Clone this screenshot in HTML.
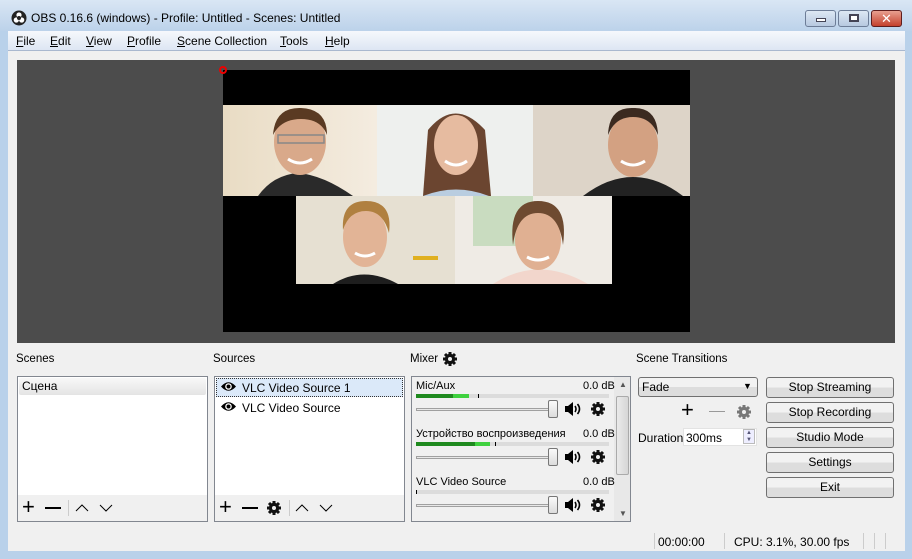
<!DOCTYPE html>
<html><head><meta charset="utf-8"><style>
*{margin:0;padding:0;box-sizing:border-box}
body{width:912px;height:559px;overflow:hidden;font-family:"Liberation Sans","DejaVu Sans",sans-serif;font-size:12px;color:#000;background:#b9d1ea;position:relative}
.a{position:absolute}
.title{left:0;top:0;width:912px;height:31px;background:linear-gradient(#d9e6f4,#bcd2ea)}
.client{left:8px;top:31px;width:897px;height:520px;background:#f0f0f0}
.menu{left:8px;top:31px;width:897px;height:20px;background:linear-gradient(#f6f8fc,#dde6f3);border-bottom:1px solid #a9b8cf}
.menu span{position:absolute;top:3px;font-size:12px}
.lbl{font-size:11.5px}
.box{background:#fff;border:1px solid #828790}
.tb{background:#f0f0f0}
.btn{left:766px;width:128px;height:21px;border:1px solid #707070;border-radius:3px;background:linear-gradient(#f2f2f2 50%,#dddddd 50%);text-align:center;line-height:19px;font-size:12px}
.wb{top:10px;height:17px;border:1px solid #6d7d97;border-radius:3px;background:linear-gradient(#dde8f4,#b7c9e0)}
.track{height:4px;background:#dcdcdc}
.sl{height:3px;border:1px solid #a0a0a0;background:#e8e8e8}
.knob{width:10px;height:18px;border:1px solid #777;border-radius:2px;background:linear-gradient(#fafafa,#dcdcdc)}
</style></head><body>
<div class="a title"></div>
<svg class="a" style="left:11px;top:10px" width="16" height="16" viewBox="0 0 16 16"><circle cx="8" cy="8" r="7.5" fill="#222"/><circle cx="8" cy="5" r="2.6" fill="#fff"/><circle cx="5.3" cy="10" r="2.6" fill="#fff"/><circle cx="10.7" cy="10" r="2.6" fill="#fff"/><circle cx="8" cy="8" r="2" fill="#222"/></svg>
<div class="a" style="left:31px;top:11px;font-size:12px">OBS 0.16.6 (windows) - Profile: Untitled - Scenes: Untitled</div>
<div class="a wb" style="left:805px;width:31px"><div class="a" style="left:10px;top:7px;width:10px;height:4px;background:#fff;border:1px solid #445"></div></div>
<div class="a wb" style="left:838px;width:31px"><div class="a" style="left:10px;top:3px;width:10px;height:8px;border:2px solid #445;background:#fff"></div></div>
<div class="a" style="left:871px;top:10px;width:31px;height:17px;border:1px solid #5e1d1d;border-radius:3px;background:linear-gradient(#e8a090,#c4402c);color:#fff;text-align:center;font-weight:bold;font-size:13px;line-height:15px">✕</div>
<div class="a client"></div>
<div class="a menu">
<span style="left:8px"><u>F</u>ile</span><span style="left:42px"><u>E</u>dit</span><span style="left:78px"><u>V</u>iew</span><span style="left:119px"><u>P</u>rofile</span><span style="left:169px"><u>S</u>cene Collection</span><span style="left:272px"><u>T</u>ools</span><span style="left:317px"><u>H</u>elp</span></div>
<div class="a" style="left:17px;top:60px;width:878px;height:283px;background:#4c4c4c"></div>
<div class="a" style="left:223px;top:70px;width:467px;height:262px;background:#000"></div>
<div class="a" style="left:219px;top:66px;width:8px;height:8px;border:2px solid #e00;border-radius:50%"></div>
<svg class="a" style="left:223px;top:105px" width="467" height="180">
<defs><linearGradient id="g1" x1="0" x2="1"><stop offset="0" stop-color="#e9dcc4"/><stop offset="1" stop-color="#f4ece0"/></linearGradient></defs>
<rect x="0" y="0" width="154" height="91" fill="url(#g1)"/>
<rect x="154" y="0" width="156" height="91" fill="#eef0ee"/>
<rect x="310" y="0" width="157" height="91" fill="#ddd4c8"/>
<rect x="73" y="91" width="159" height="88" fill="#e6e0d2"/>
<rect x="232" y="91" width="157" height="88" fill="#efebe5"/>
<rect x="250" y="91" width="60" height="50" fill="#c9dcc0"/>
<path d="M35 91 Q50 70 75 68 Q100 70 130 91Z" fill="#2a2a2a"/><ellipse cx="77" cy="37" rx="26" ry="33" fill="#d9a98a"/><path d="M50 30 Q52 2 78 3 Q104 4 104 30 Q98 14 78 14 Q58 14 50 30Z" fill="#5a3a22"/><rect x="55" y="30" width="46" height="8" fill="none" stroke="#888" stroke-width="1.5"/><path d="M65 54 Q77 62 89 54" stroke="#fff" stroke-width="3" fill="none"/>
<path d="M200 91 L205 25 Q232 -8 262 25 L268 91Z" fill="#6b4530"/><ellipse cx="233" cy="40" rx="22" ry="30" fill="#e6bba0"/><path d="M222 56 Q233 64 244 56" stroke="#fff" stroke-width="3" fill="none"/><path d="M200 91 Q233 78 266 91Z" fill="#b9cde0"/>
<path d="M360 91 Q385 72 410 72 Q435 72 460 91Z" fill="#222"/><ellipse cx="410" cy="40" rx="25" ry="32" fill="#d3a182"/><path d="M385 30 Q386 2 410 3 Q434 2 435 30 Q428 12 410 12 Q392 12 385 30Z" fill="#3b2a20"/><path d="M398 56 Q410 64 422 56" stroke="#fff" stroke-width="3" fill="none"/>
<path d="M110 179 Q140 160 175 179Z" fill="#1e1e1e"/><ellipse cx="142" cy="132" rx="22" ry="30" fill="#e2b496"/><path d="M120 125 Q118 96 143 96 Q170 96 166 128 Q160 106 143 106 Q126 106 120 125Z" fill="#b08040"/><path d="M132 148 Q142 154 152 148" stroke="#fff" stroke-width="3" fill="none"/><rect x="190" y="151" width="25" height="4" fill="#e0b020"/>
<path d="M270 179 Q315 150 365 179Z" fill="#f2d6cc"/><ellipse cx="315" cy="135" rx="23" ry="30" fill="#e0b092"/><path d="M290 140 Q285 96 315 96 Q346 96 340 140 Q336 108 315 108 Q294 108 290 140Z" fill="#6e4a30"/><path d="M304 152 Q315 158 326 152" stroke="#fff" stroke-width="3" fill="none"/>
</svg>
<div class="a lbl" style="left:16px;top:353px">Scenes</div>
<div class="a lbl" style="left:213px;top:353px">Sources</div>
<div class="a lbl" style="left:410px;top:353px">Mixer</div>
<svg class="a" style="left:442px;top:351px" width="16" height="16" viewBox="0 0 16 16"><circle cx="8" cy="8" r="5.2" fill="#111"/><g stroke="#111" stroke-width="3"><path d="M8 1v14M1 8h14M3 3l10 10M13 3L3 13"/></g><circle cx="8" cy="8" r="2" fill="#f0f0f0"/></svg>
<div class="a lbl" style="left:636px;top:353px">Scene Transitions</div>
<div class="a box" style="left:17px;top:376px;width:191px;height:146px"></div>
<div class="a" style="left:19px;top:378px;width:187px;height:17px;background:linear-gradient(#f8f8f8,#e4e4e4);border-radius:2px"></div>
<div class="a" style="left:22px;top:379px">Сцена</div>
<div class="a tb" style="left:18px;top:495px;width:189px;height:26px"></div>
<div class="a" style="left:22px;top:495px;font-size:22px;line-height:24px">+</div>
<div class="a" style="left:45px;top:507px;width:16px;height:2px;background:#000"></div>
<div class="a" style="left:68px;top:500px;width:1px;height:16px;background:#ccc"></div>
<svg class="a" style="left:74px;top:502px" width="44" height="12"><path d="M2 9l6-6 6 6M26 3l6 6 6-6" stroke="#000" fill="none"/></svg>
<div class="a box" style="left:214px;top:376px;width:191px;height:146px"></div>
<div class="a" style="left:216px;top:378px;width:187px;height:19px;background:#dbe9f9;border:1px dotted #333"></div>
<svg class="a" style="left:220px;top:381px" width="17" height="11" viewBox="0 0 17 11"><path d="M1 5.5Q8.5 -3 16 5.5Q8.5 14 1 5.5Z" fill="#000"/><circle cx="8.5" cy="5.5" r="3.3" fill="#fff"/><circle cx="8.5" cy="5.5" r="2" fill="#000"/></svg>
<div class="a" style="left:242px;top:381px">VLC Video Source 1</div>
<svg class="a" style="left:220px;top:401px" width="17" height="11" viewBox="0 0 17 11"><path d="M1 5.5Q8.5 -3 16 5.5Q8.5 14 1 5.5Z" fill="#000"/><circle cx="8.5" cy="5.5" r="3.3" fill="#fff"/><circle cx="8.5" cy="5.5" r="2" fill="#000"/></svg>
<div class="a" style="left:242px;top:401px">VLC Video Source</div>
<div class="a tb" style="left:215px;top:495px;width:189px;height:26px"></div>
<div class="a" style="left:219px;top:495px;font-size:22px;line-height:24px">+</div>
<div class="a" style="left:242px;top:507px;width:16px;height:2px;background:#000"></div>
<svg class="a" style="left:266px;top:500px" width="16" height="16" viewBox="0 0 16 16"><circle cx="8" cy="8" r="5.2" fill="#111"/><g stroke="#111" stroke-width="3"><path d="M8 1v14M1 8h14M3 3l10 10M13 3L3 13"/></g><circle cx="8" cy="8" r="2" fill="#f0f0f0"/></svg>
<div class="a" style="left:289px;top:500px;width:1px;height:16px;background:#ccc"></div>
<svg class="a" style="left:294px;top:502px" width="44" height="12"><path d="M2 9l6-6 6 6M26 3l6 6 6-6" stroke="#000" fill="none"/></svg>
<div class="a box" style="left:411px;top:376px;width:220px;height:146px;background:#f0f0f0"></div>
<div class="a" style="left:614px;top:377px;width:16px;height:144px;background:#e8e8e8"></div>
<div class="a" style="left:616px;top:396px;width:13px;height:79px;background:linear-gradient(90deg,#eaeaea,#d6d6d6);border:1px solid #aaa;border-radius:2px"></div>
<div class="a" style="left:619px;top:380px;font-size:8px;color:#555">▲</div>
<div class="a" style="left:619px;top:509px;font-size:8px;color:#555">▼</div>
<div class="a" style="left:416px;top:380px;font-size:11px">Mic/Aux</div><div class="a" style="left:583px;top:380px;font-size:11px">0.0 dB</div>
<div class="a track" style="left:416px;top:394px;width:193px"></div><div class="a" style="left:416px;top:394px;width:53px;height:4px;background:linear-gradient(90deg,#1f8a1f 70%,#3fd13f 70%)"></div><div class="a" style="left:478px;top:394px;width:1px;height:4px;background:#000"></div>
<div class="a sl" style="left:416px;top:408px;width:140px"></div><div class="a knob" style="left:548px;top:400px"></div>
<svg class="a" style="left:564px;top:402px" width="18" height="14" viewBox="0 0 18 14"><path d="M1 4h3l5-4v14l-5-4H1z" fill="#000"/><path d="M11 4q2 3 0 6M13.5 2q4 5 0 10" stroke="#000" stroke-width="1.6" fill="none"/></svg>
<svg class="a" style="left:590px;top:401px" width="16" height="16" viewBox="0 0 16 16"><circle cx="8" cy="8" r="5.2" fill="#111"/><g stroke="#111" stroke-width="3"><path d="M8 1v14M1 8h14M3 3l10 10M13 3L3 13"/></g><circle cx="8" cy="8" r="2" fill="#f0f0f0"/></svg>
<div class="a" style="left:416px;top:428px;font-size:11px">Устройство воспроизведения</div><div class="a" style="left:583px;top:428px;font-size:11px">0.0 dB</div>
<div class="a track" style="left:416px;top:442px;width:193px"></div><div class="a" style="left:416px;top:442px;width:74px;height:4px;background:linear-gradient(90deg,#1f8a1f 80%,#3fd13f 80%)"></div><div class="a" style="left:495px;top:442px;width:1px;height:4px;background:#000"></div>
<div class="a sl" style="left:416px;top:456px;width:140px"></div><div class="a knob" style="left:548px;top:448px"></div>
<svg class="a" style="left:564px;top:450px" width="18" height="14" viewBox="0 0 18 14"><path d="M1 4h3l5-4v14l-5-4H1z" fill="#000"/><path d="M11 4q2 3 0 6M13.5 2q4 5 0 10" stroke="#000" stroke-width="1.6" fill="none"/></svg>
<svg class="a" style="left:590px;top:449px" width="16" height="16" viewBox="0 0 16 16"><circle cx="8" cy="8" r="5.2" fill="#111"/><g stroke="#111" stroke-width="3"><path d="M8 1v14M1 8h14M3 3l10 10M13 3L3 13"/></g><circle cx="8" cy="8" r="2" fill="#f0f0f0"/></svg>
<div class="a" style="left:416px;top:476px;font-size:11px">VLC Video Source</div><div class="a" style="left:583px;top:476px;font-size:11px">0.0 dB</div>
<div class="a track" style="left:416px;top:490px;width:193px"></div><div class="a" style="left:416px;top:490px;width:1px;height:4px;background:#000"></div>
<div class="a sl" style="left:416px;top:504px;width:140px"></div><div class="a knob" style="left:548px;top:496px"></div>
<svg class="a" style="left:564px;top:498px" width="18" height="14" viewBox="0 0 18 14"><path d="M1 4h3l5-4v14l-5-4H1z" fill="#000"/><path d="M11 4q2 3 0 6M13.5 2q4 5 0 10" stroke="#000" stroke-width="1.6" fill="none"/></svg>
<svg class="a" style="left:590px;top:497px" width="16" height="16" viewBox="0 0 16 16"><circle cx="8" cy="8" r="5.2" fill="#111"/><g stroke="#111" stroke-width="3"><path d="M8 1v14M1 8h14M3 3l10 10M13 3L3 13"/></g><circle cx="8" cy="8" r="2" fill="#f0f0f0"/></svg>
<div class="a" style="left:638px;top:377px;width:120px;height:20px;border:1px solid #707070;border-radius:3px;background:linear-gradient(#f2f2f2 50%,#dddddd 50%)"></div>
<div class="a" style="left:642px;top:380px">Fade</div>
<div class="a" style="left:743px;top:381px;font-size:9px">▼</div>
<div class="a" style="left:681px;top:398px;font-size:22px;line-height:24px">+</div>
<div class="a" style="left:709px;top:411px;width:16px;height:1px;background:#999"></div>
<svg class="a" style="left:736px;top:404px" width="16" height="16" viewBox="0 0 16 16"><circle cx="8" cy="8" r="5.2" fill="#777"/><g stroke="#777" stroke-width="3"><path d="M8 1v14M1 8h14M3 3l10 10M13 3L3 13"/></g><circle cx="8" cy="8" r="2" fill="#f0f0f0"/></svg>
<div class="a" style="left:638px;top:431px">Duration</div>
<div class="a" style="left:683px;top:428px;width:74px;height:18px;background:#fff;border:1px solid #e3e3e3"></div>
<div class="a" style="left:686px;top:431px">300ms</div>
<div class="a" style="left:743px;top:429px;width:12px;height:15px;border:1px solid #bbb;background:#eef;font-size:6px;line-height:7px;text-align:center;color:#557">▲<br>▼</div>
<div class="a btn" style="top:377px">Stop Streaming</div>
<div class="a btn" style="top:402px">Stop Recording</div>
<div class="a btn" style="top:427px">Studio Mode</div>
<div class="a btn" style="top:452px">Settings</div>
<div class="a btn" style="top:477px">Exit</div>
<div class="a" style="left:654px;top:533px;width:1px;height:16px;background:#ccc"></div>
<div class="a" style="left:658px;top:535px">00:00:00</div>
<div class="a" style="left:724px;top:533px;width:1px;height:16px;background:#ccc"></div>
<div class="a" style="left:734px;top:535px">CPU: 3.1%, 30.00 fps</div>
<div class="a" style="left:863px;top:533px;width:1px;height:16px;background:#ccc"></div>
<div class="a" style="left:874px;top:533px;width:1px;height:16px;background:#ccc"></div>
<div class="a" style="left:885px;top:533px;width:1px;height:16px;background:#ccc"></div>
</body></html>
